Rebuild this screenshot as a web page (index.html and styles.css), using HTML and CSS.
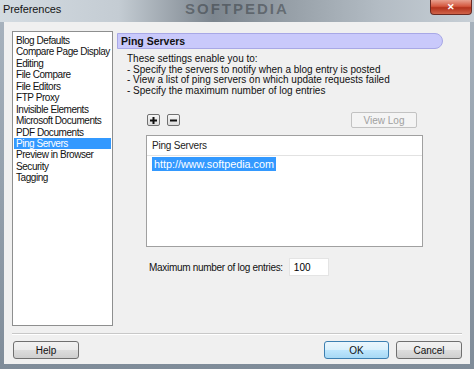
FILE: index.html
```html
<!DOCTYPE html>
<html lang="en">
<head>
    <meta charset="UTF-8">
    <title>Preferences</title>
    <link rel="stylesheet" href="styles.css">
</head>
<body>
    <div class="window">
        <div class="titlebar">
            <span class="title">Preferences</span>
            <span class="watermark">SOFTPEDIA</span>
            <button class="close-btn">&#x2715;</button>
        </div>
        <div class="client">
            <div class="main">
                <ul class="categories">
                    <li>Blog Defaults</li>
                    <li>Compare Page Display</li>
                    <li>Editing</li>
                    <li>File Compare</li>
                    <li>File Editors</li>
                    <li>FTP Proxy</li>
                    <li>Invisible Elements</li>
                    <li>Microsoft Documents</li>
                    <li>PDF Documents</li>
                    <li class="selected">Ping Servers</li>
                    <li>Preview in Browser</li>
                    <li>Security</li>
                    <li>Tagging</li>
                </ul>
                <div class="panel">
                    <div class="panel-header">Ping Servers</div>
                    <div class="description">
                        <p>These settings enable you to:</p>
                        <p>- Specify the servers to notify when a blog entry is posted</p>
                        <p>- View a list of ping servers on which update requests failed</p>
                        <p>- Specify the maximum number of log entries</p>
                    </div>
                    <div class="toolbar">
                        <button class="icon-btn">
                            <svg width="9" height="9" viewBox="0 0 9 9"><path d="M4.5 1v7M1 4.5h7" stroke="#111" stroke-width="2"/></svg>
                        </button>
                        <button class="icon-btn">
                            <svg width="9" height="9" viewBox="0 0 9 9"><path d="M1 4.5h7" stroke="#111" stroke-width="2"/></svg>
                        </button>
                        <button class="view-log" disabled>View Log</button>
                    </div>
                    <div class="server-list">
                        <div class="list-head">Ping Servers</div>
                        <div class="list-row"><span class="row-selected">http://www.softpedia.com</span></div>
                    </div>
                    <div class="max-row">
                        <label>Maximum number of log entries:</label>
                        <input type="text" value="100">
                    </div>
                </div>
            </div>
            <div class="separator"></div>
            <div class="footer">
                <button class="btn">Help</button>
                <div class="footer-right">
                    <button class="btn default">OK</button>
                    <button class="btn">Cancel</button>
                </div>
            </div>
        </div>
    </div>
</body>
</html>
```

FILE: styles.css
```css
body {
    margin: 0;
    padding: 0;
    font-family: 'Liberation Sans', Arial, sans-serif;
    font-size: 10px;
    color: #111;
    overflow: hidden;
}

.window {
    width: 474px;
    height: 369px;
    display: flex;
    flex-direction: column;
    background: linear-gradient(180deg, #a9b4bf 0%, #7f8c99 100%);
    box-sizing: border-box;
}

.titlebar {
    height: 22px;
    flex-shrink: 0;
    position: relative;
    display: flex;
    align-items: center;
    background: linear-gradient(90deg, #d3dbe1 0%, #c4ccd3 25%, #7c858e 45%, #959ea6 60%, #b3bcc4 80%, #c7cfd6 100%);
}

.title {
    font-size: 11px;
    letter-spacing: -0.1px;
    color: #151515;
    padding-left: 3px;
    margin-top: -4px;
}

.watermark {
    position: absolute;
    left: 185px;
    top: 1px;
    font-size: 15px;
    line-height: 16px;
    font-weight: bold;
    letter-spacing: 2px;
    color: rgba(40, 45, 50, 0.45);
}

.close-btn {
    position: absolute;
    right: 2px;
    top: 0;
    width: 42px;
    height: 15px;
    border: 1px solid #6b2a22;
    border-top: none;
    border-radius: 0 0 4px 4px;
    background: linear-gradient(180deg, #e8a08f 0%, #d4583f 45%, #b3321c 55%, #d0644a 100%);
    color: #fff;
    font-size: 9px;
    font-weight: bold;
    line-height: 12px;
    padding: 0;
}

.client {
    flex: 1;
    margin: 0 4px 5px 4px;
    background-color: #f0f0f0;
    padding: 9px 8px 0 8px;
    display: flex;
    flex-direction: column;
}

.main {
    display: flex;
    gap: 4px;
}

.categories {
    list-style: none;
    margin: 0;
    width: 101px;
    height: 295px;
    box-sizing: border-box;
    border: 1px solid #8e8f8f;
    background: #fff;
    padding: 3px 1px;
    font-size: 10px;
    letter-spacing: -0.45px;
}

.categories li {
    height: 11.45px;
    line-height: 11.45px;
    padding-left: 2px;
    white-space: nowrap;
}

.categories li.selected {
    background-color: #3399ff;
    color: #fff;
}

.panel {
    flex: 1;
    padding-top: 2px;
}

.panel-header {
    width: 326px;
    height: 16px;
    box-sizing: border-box;
    background: #c9c9fb;
    border: 1px solid #a8a8e6;
    border-radius: 0 8px 8px 0;
    font-weight: bold;
    font-size: 10.5px;
    line-height: 14px;
    padding-left: 3px;
}

.description {
    margin: 5px 0 0 10px;
    font-size: 10px;
    line-height: 10.6px;
}

.description p {
    margin: 0;
}

.toolbar {
    display: flex;
    align-items: center;
    margin: 16px 0 0 30px;
    width: 270px;
    gap: 7px;
}

.icon-btn {
    width: 13px;
    height: 12px;
    padding: 0;
    display: flex;
    align-items: center;
    justify-content: center;
    border: 1px solid #707070;
    border-radius: 2px;
    background: linear-gradient(180deg, #f6f6f6, #dcdcdc);
}

.view-log {
    margin-left: auto;
    width: 66px;
    height: 16px;
    border: 1px solid #c2c2c2;
    border-radius: 2px;
    background: #f4f4f4;
    color: #a0a0a0;
    font-family: inherit;
    font-size: 10px;
    padding: 0;
}

.server-list {
    margin: 7px 0 0 29px;
    width: 277px;
    height: 112px;
    box-sizing: border-box;
    border: 1px solid #a0a0a0;
    background: #fff;
}

.list-head {
    height: 19px;
    line-height: 19px;
    border-bottom: 1px solid #e2e2e2;
    padding-left: 5px;
    color: #222;
    letter-spacing: -0.2px;
}

.list-row {
    padding: 1px 0 0 5px;
}

.row-selected {
    display: inline-block;
    background: #3399ff;
    color: #fff;
    padding: 1px 2px;
    line-height: 12px;
    font-size: 10.8px;
}

.max-row {
    display: flex;
    align-items: center;
    margin: 11px 0 0 32px;
    gap: 6px;
}

.max-row label {
    letter-spacing: -0.3px;
}

.max-row input {
    width: 40px;
    height: 18px;
    box-sizing: border-box;
    border: 1px solid #e4e4e4;
    font-family: inherit;
    font-size: 10px;
    padding: 0 4px;
    outline: none;
}

.separator {
    margin-top: 7px;
    height: 1px;
    background: #c8c8c8;
    border-bottom: 1px solid #fff;
}

.footer {
    display: flex;
    justify-content: space-between;
    margin-top: 6px;
    padding-left: 1px;
}

.footer-right {
    display: flex;
    gap: 7px;
}

.btn {
    width: 66px;
    height: 18px;
    border: 1px solid #707070;
    border-radius: 3px;
    background: linear-gradient(180deg, #f2f2f2 0%, #ebebeb 50%, #dddddd 51%, #cfcfcf 100%);
    font-family: inherit;
    font-size: 10px;
    color: #111;
    padding: 0;
}

.btn.default {
    width: 65px;
    border-color: #3c7fb1;
    background: linear-gradient(180deg, #eaf6fd 0%, #d9f0fc 50%, #bee6fd 51%, #a7d9f5 100%);
}
```
